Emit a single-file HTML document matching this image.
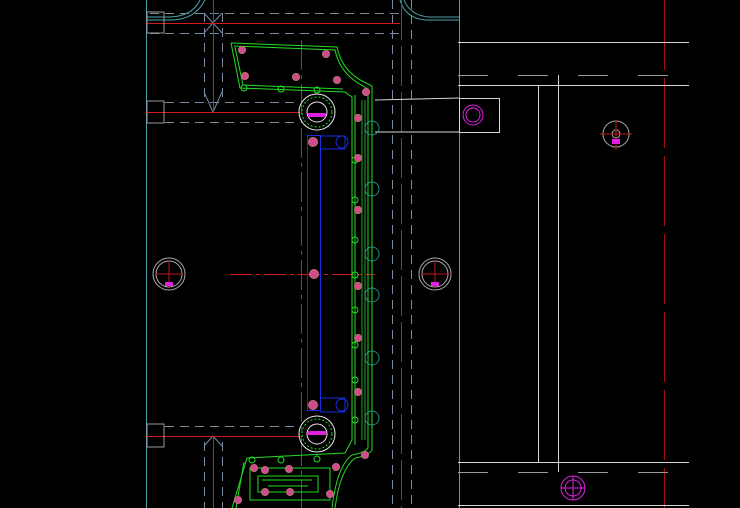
<!DOCTYPE html>
<html><head><meta charset="utf-8"><style>
html,body{margin:0;padding:0;background:#000;width:740px;height:508px;overflow:hidden}
svg{display:block}
</style></head><body>
<svg width="740" height="508" viewBox="0 0 740 508" xmlns="http://www.w3.org/2000/svg" fill="none" stroke-width="1">
<rect width="740" height="508" fill="#000"/>
<line x1="146.5" y1="0" x2="146.5" y2="508" stroke="#4fa3ad"/>
<line x1="459.5" y1="0" x2="459.5" y2="508" stroke="#4fa3ad"/>
<path d="M146 20 H170 Q195 20 205 0" stroke="#4fa3ad"/>
<path d="M146 17 H168 Q192 17 200 0" stroke="#4fa3ad"/>
<path d="M459 20 H425 Q405 18 400 0" stroke="#4fa3ad"/>
<path d="M459 17 H428 Q410 15 404 0" stroke="#4fa3ad"/>
<g stroke="#7a8aa0" stroke-dasharray="9 6">
<line x1="150" y1="13.5" x2="400" y2="13.5"/>
<line x1="150" y1="33.5" x2="400" y2="33.5"/>
<line x1="165" y1="102.5" x2="300" y2="102.5"/>
<line x1="165" y1="122.5" x2="300" y2="122.5"/>
<line x1="165" y1="426.5" x2="300" y2="426.5"/>
<line x1="204.5" y1="13" x2="204.5" y2="102"/>
<line x1="222.5" y1="13" x2="222.5" y2="102"/>
<line x1="204.5" y1="442" x2="204.5" y2="508"/>
<line x1="222.5" y1="442" x2="222.5" y2="508"/>
<line x1="392.5" y1="0" x2="392.5" y2="508"/>
<line x1="411.5" y1="0" x2="411.5" y2="508"/>
</g>
<path d="M204 13 L222 33 M222 13 L204 33 M204 92 L213 112 L222 92 M204 446 L213 436 L222 446" stroke="#7a8aa0"/>
<g stroke="#d01c1c">
<line x1="146" y1="23.5" x2="400" y2="23.5"/>
<line x1="146" y1="112.5" x2="300" y2="112.5"/>
<line x1="146" y1="436.5" x2="300" y2="436.5"/>
<line x1="213.5" y1="0" x2="213.5" y2="112"/>
<line x1="213.5" y1="436" x2="213.5" y2="508"/>
<line x1="401.5" y1="0" x2="401.5" y2="508" stroke-dasharray="40 6"/>
<line x1="301.5" y1="40" x2="301.5" y2="508" stroke-dasharray="30 5 4 5"/>
<line x1="230" y1="274.5" x2="375" y2="274.5" stroke-dasharray="22 4 4 4"/>
<line x1="664.5" y1="0" x2="664.5" y2="508" stroke-dasharray="70 8" stroke="#a01010"/>
</g>
<g stroke="#9a9a9a">
<rect x="147" y="12" width="17" height="21"/>
<rect x="147" y="101" width="17" height="22"/>
<rect x="147" y="424" width="17" height="23"/>
</g>
<g stroke="#d8d8d8">
<line x1="458" y1="42.5" x2="689" y2="42.5"/>
<line x1="458" y1="85.5" x2="689" y2="85.5"/>
<line x1="538.5" y1="85" x2="538.5" y2="462"/>
<line x1="558.5" y1="75" x2="558.5" y2="472"/>
<line x1="458" y1="462.5" x2="689" y2="462.5"/>
<line x1="458" y1="505.5" x2="689" y2="505.5"/>
<rect x="459.5" y="98.5" width="40" height="34"/>
<path d="M375 100 L459 98 M375 132 L459 132"/>
</g>
<g stroke="#9a9a9a" stroke-dasharray="30 30">
<line x1="458" y1="75.5" x2="689" y2="75.5"/>
<line x1="458" y1="472.5" x2="689" y2="472.5"/>
</g>
<g stroke="#e020e0">
<circle cx="473" cy="115" r="10"/><circle cx="473" cy="115" r="7"/>
<circle cx="573" cy="488" r="12"/><circle cx="573" cy="488" r="8"/>
<line x1="561" y1="488" x2="585" y2="488"/><line x1="573" y1="476" x2="573" y2="500"/>
</g>
<g stroke="#aaa">
<circle cx="616" cy="134" r="13"/><circle cx="616" cy="134" r="4"/>
<circle cx="169" cy="274" r="16"/><circle cx="169" cy="274" r="13"/>
<circle cx="435" cy="274" r="16"/><circle cx="435" cy="274" r="13"/>
</g>
<g stroke="#c01818">
<path d="M600 134 H632 M616 120 V150 M155 274 H183 M169 260 V288 M421 274 H449 M435 260 V288"/>
</g>
<rect x="612" y="139" width="8" height="5" fill="#e020e0"/>
<rect x="165" y="282" width="8" height="4" fill="#e020e0"/>
<rect x="431" y="282" width="8" height="4" fill="#e020e0"/>
<g stroke="#1a2ee0">
<rect x="307.5" y="135.5" width="13" height="275"/>
<path d="M320 136 H345 V149 H320 M320 398 H345 V412 H320"/>
<circle cx="342" cy="142" r="6"/><circle cx="342" cy="405" r="6"/>
</g>
<g stroke="#22dd22">
<path d="M231 43 L337 47 Q342 72 366 83 L372 86 L372 450 Q368 456 355 458 Q340 470 335 508"/>
<path d="M234 46 L335 50 Q340 74 363 86 L368 89 L368 448 Q364 453 352 455 Q337 466 332 508"/>
<path d="M231 43 L240 88 L345 92 L352 97 L352 440 L345 453 L247 458 L232 508"/>
<path d="M235 47 L243 85 L343 89 M355 95 V445 M244 462 L236 508"/>
<path d="M250 468 H330 V500 H250 Z M258 476 H318 V492 H258 Z M262 480 H312 M268 486 H308"/>
<path d="M362 100 V440 M365 100 V440" stroke="#1fa01f"/>
</g>
<g fill="none" stroke="#22dd22">
<circle cx="244" cy="88" r="3"/><circle cx="281" cy="89" r="3"/><circle cx="317" cy="90" r="3"/>
<circle cx="355" cy="160" r="3"/><circle cx="355" cy="200" r="3"/><circle cx="355" cy="240" r="3"/>
<circle cx="355" cy="275" r="3"/><circle cx="355" cy="310" r="3"/><circle cx="355" cy="345" r="3"/>
<circle cx="355" cy="380" r="3"/><circle cx="355" cy="420" r="3"/>
<circle cx="317" cy="459" r="3"/><circle cx="281" cy="460" r="3"/><circle cx="252" cy="460" r="3"/>
</g>
<g stroke="#3aa" opacity="0.8">
<circle cx="372" cy="128" r="7"/><circle cx="372" cy="189" r="7"/><circle cx="372" cy="254" r="7"/>
<circle cx="372" cy="295" r="7"/><circle cx="372" cy="358" r="7"/><circle cx="372" cy="418" r="7"/>
</g>
<g fill="#d04a90" stroke="#c07070">
<circle cx="242" cy="50" r="3.5"/><circle cx="326" cy="54" r="3.5"/><circle cx="245" cy="76" r="3.5"/>
<circle cx="296" cy="77" r="3.5"/><circle cx="337" cy="80" r="3.5"/><circle cx="366" cy="92" r="3.5"/>
<circle cx="358" cy="118" r="3.5"/><circle cx="313" cy="142" r="4.5"/><circle cx="358" cy="158" r="3.5"/>
<circle cx="358" cy="210" r="3.5"/><circle cx="314" cy="274" r="4.5"/><circle cx="358" cy="286" r="3.5"/>
<circle cx="358" cy="338" r="3.5"/><circle cx="313" cy="405" r="4.5"/><circle cx="358" cy="392" r="3.5"/>
<circle cx="365" cy="455" r="3.5"/><circle cx="336" cy="467" r="3.5"/><circle cx="254" cy="468" r="3.5"/>
<circle cx="265" cy="470" r="3.5"/><circle cx="289" cy="469" r="3.5"/><circle cx="330" cy="494" r="3.5"/>
<circle cx="265" cy="492" r="3.5"/><circle cx="290" cy="492" r="3.5"/><circle cx="238" cy="500" r="3.5"/>
</g>
<g stroke="#e8e8e8">
<circle cx="317" cy="112" r="18"/><circle cx="317" cy="112" r="10"/>
<circle cx="317" cy="434" r="18"/><circle cx="317" cy="434" r="10"/>
</g>
<g stroke="#22dd22" stroke-dasharray="2 2">
<circle cx="317" cy="112" r="15"/><circle cx="317" cy="434" r="15"/>
</g>
<rect x="308" y="113" width="18" height="4" fill="#e020e0"/>
<rect x="308" y="431" width="18" height="4" fill="#e020e0"/>
</svg>
</body></html>
